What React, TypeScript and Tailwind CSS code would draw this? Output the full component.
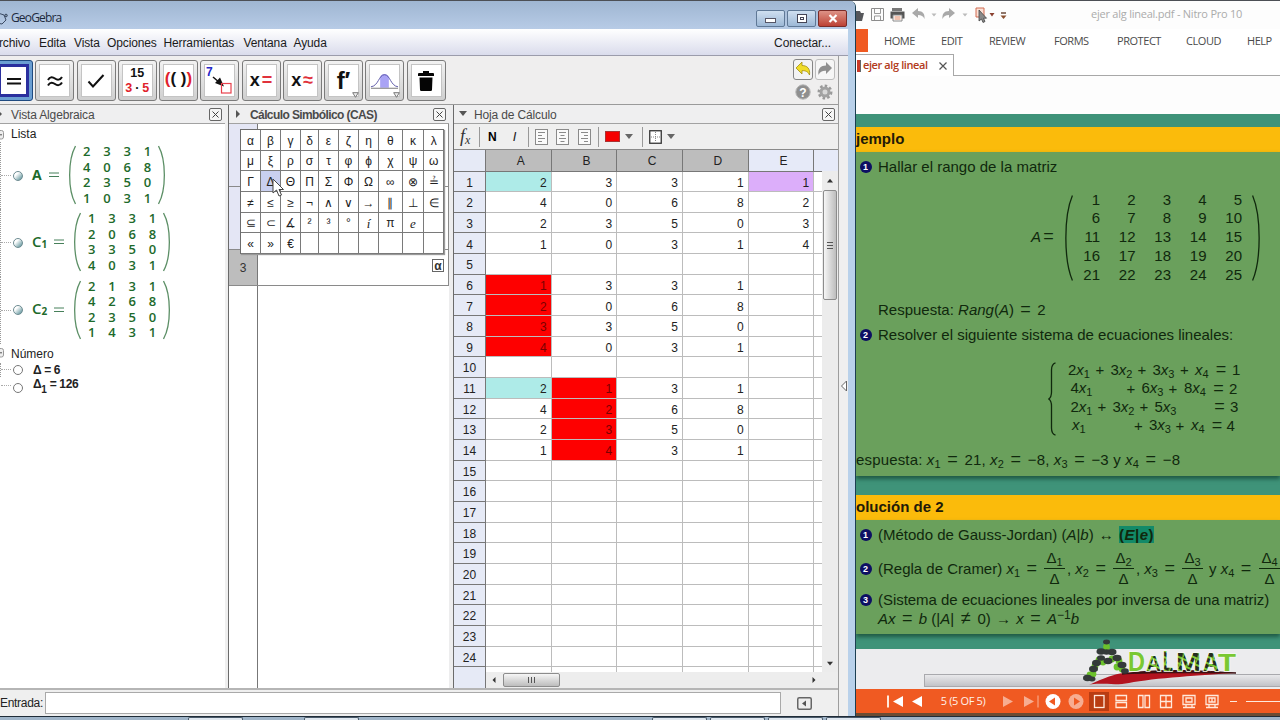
import { Fragment } from "react";
import type { ReactNode } from "react";
import clsx from "clsx";

const GREEK_ROWS = ["αβγδεζηθκλ", "μξρστφϕχψω", "ΓΔΘΠΣΦΩ∞⊗≟", "≠≤≥¬∧∨→∥⊥∈", "⊆⊂∡²³°íπe ", "«»€       "];

const COLUMNS = ["A", "B", "C", "D", "E"];

const SHEET: Record<number, string[]> = {
  1: ["2", "3", "3", "1", "1"],
  2: ["4", "0", "6", "8", "2"],
  3: ["2", "3", "5", "0", "3"],
  4: ["1", "0", "3", "1", "4"],
  6: ["1", "3", "3", "1"],
  7: ["2", "0", "6", "8"],
  8: ["3", "3", "5", "0"],
  9: ["4", "0", "3", "1"],
  11: ["2", "1", "3", "1"],
  12: ["4", "2", "6", "8"],
  13: ["2", "3", "5", "0"],
  14: ["1", "4", "3", "1"],
};

const CELL_FILL: Record<string, string> = {
  A1: "bg-[#aeebe8]",
  E1: "bg-[#dcaefa]",
  A6: "bg-[#fe0000] text-[#7a0000]",
  A7: "bg-[#fe0000] text-[#7a0000]",
  A8: "bg-[#fe0000] text-[#7a0000]",
  A9: "bg-[#fe0000] text-[#7a0000]",
  A11: "bg-[#aeebe8]",
  B11: "bg-[#fe0000] text-[#7a0000]",
  B12: "bg-[#fe0000] text-[#7a0000]",
  B13: "bg-[#fe0000] text-[#7a0000]",
  B14: "bg-[#fe0000] text-[#7a0000]",
};

const LISTS = [
  { name: "A", sub: "", rows: ["2331", "4068", "2350", "1031"] },
  { name: "C", sub: "1", rows: ["1331", "2068", "3350", "4031"] },
  { name: "C", sub: "2", rows: ["2131", "4268", "2350", "1431"] },
];

// [text, width] pairs, one array per equation
const EQUATIONS: { start: number; terms: [string, number][] }[] = [
  {
    start: 0,
    terms: [["2*x*_1", 27.5], ["+", 15], ["3*x*_2", 27], ["+", 15], ["3*x*_3", 27.5], ["+", 15], ["*x*_4", 18.5], ["=", 18.5], ["1", 10]],
  },
  { start: 2.5, terms: [["4*x*_1", 56], ["+", 15], ["6*x*_3", 27], ["+", 15.5], ["8*x*_4", 27], ["=", 18], ["2", 10]] },
  { start: 2.5, terms: [["2*x*_1", 27], ["+", 15], ["3*x*_2", 27], ["+", 15], ["5*x*_3", 57.5], ["=", 18], ["3", 10]] },
  { start: 4, terms: [["*x*_1", 62], ["+", 15], ["3*x*_3", 26.5], ["+", 15.5], ["*x*_4", 18.5], ["=", 17], ["4", 10]] },
];

// *x* is italic, _1 is a subscript, ^{-1} is a superscript, relations are set wide
const MathText = ({ children }: { children: string }) => (
  <>
    {children.split(/(\*[^*]+\*|_.|\^\{[^}]+\}|[=≠→↔])/).map((part, i) => {
      if (/^[=≠→↔]$/.test(part))
        return (
          <span
            key={i}
            className={clsx(
              "inline-block text-center leading-[10px]",
              part === "=" || part === "≠" ? "w-[15px] text-[18px]" : "w-[17px] text-[15px]"
            )}
          >
            {part}
          </span>
        );
      if (part.startsWith("*")) return <i key={i}>{part.slice(1, -1)}</i>;
      if (part.startsWith("_"))
        return (
          <span key={i} className="align-[-3px] text-[11px] leading-none">
            {part.slice(1)}
          </span>
        );
      if (part.startsWith("^"))
        return (
          <span key={i} className="align-[5px] text-[12px] leading-none">
            {part.slice(2, -1)}
          </span>
        );
      return <Fragment key={i}>{part}</Fragment>;
    })}
  </>
);

const CloseBox = () => (
  <svg width="13" height="13" viewBox="0 0 13 13" fill="none" className="shrink-0">
    <rect x="0.5" y="0.5" width="12" height="12" rx="1.5" fill="#f6f6f6" stroke="#666" />
    <path d="M3.5 3.5l6 6M9.5 3.5l-6 6" stroke="#444" />
  </svg>
);

const Triangle = ({ dir = "down", className = "" }: { dir?: "down" | "right" | "left" | "up"; className?: string }) => {
  const d = { down: "M0 1h8l-4 5z", right: "M2 0v8l4-4z", left: "M6 0v8l-4-4z", up: "M0 6h8l-4-5z" }[dir];
  return (
    <svg width="8" height="8" viewBox="0 0 8 8" fill="currentColor" className={clsx("shrink-0", className)}>
      <path d={d} />
    </svg>
  );
};

const ToolButton = ({ children, active, menu }: { children: ReactNode; active?: boolean; menu?: boolean }) => (
  <div
    className={clsx(
      "relative h-[41px] w-[39px] shrink-0 rounded-[3px] border p-[3px]",
      active ? "border-[#1f4a80] bg-[#6b9fd2]" : "border-[#7b7b7b] bg-linear-to-b from-[#f2f2f2] to-[#cfcfcf]"
    )}
  >
    <div
      className={clsx(
        "flex h-full w-full items-center justify-center overflow-hidden",
        active ? "border-[3px] border-[#2a2f9e] bg-white" : "border border-[#c4c4c4] bg-white"
      )}
    >
      {children}
    </div>
    {menu && (
      <svg className="absolute right-[3px] bottom-[2px]" width="7" height="6" viewBox="0 0 7 6">
        <path d="M.7.7h5.6L3.5 5.3z" fill="#eee" stroke="#777" />
      </svg>
    )}
  </div>
);

const Toolbar = () => (
  <div className="flex h-[49px] shrink-0 border-b border-[#9a9a9a] bg-[#efeeee] pt-[4px]">
    <div className="-ml-[6px] flex gap-[2.25px]">
      <ToolButton active>
        <svg width="16" height="12" viewBox="0 0 16 12" stroke="#111" strokeWidth="2">
          <path d="M1 4h14M1 8.5h14" />
        </svg>
      </ToolButton>
      <ToolButton>
        <svg width="16" height="14" viewBox="0 0 16 14" stroke="#111" strokeWidth="2" fill="none">
          <path d="M1 6c2-4 5-3 7-1.500s5 2 7-1.500M1 11.500c2-4 5-3 7-1.500s5 2 7-1.500" />
        </svg>
      </ToolButton>
      <ToolButton>
        <svg width="18" height="16" viewBox="0 0 18 16" stroke="#111" strokeWidth="2" fill="none">
          <path d="M1.500 8.500L6 13.500 16.500 2" />
        </svg>
      </ToolButton>
      <ToolButton>
        <div className="text-center text-[12.500px] leading-[14.500px] font-bold">
          <div className="text-[#111]">15</div>
          <div className="whitespace-nowrap text-[#e0222c]">
            3<span className="px-[3px] text-[#111]">·</span>5
          </div>
        </div>
      </ToolButton>
      <ToolButton>
        <div className="-mt-1 text-[17px] leading-none whitespace-nowrap text-[#111]">
          <b className="font-bold text-[#e0222c]">(</b>
          <span className="font-bold">( )</span>
          <b className="font-bold text-[#e0222c]">)</b>
        </div>
      </ToolButton>
      <ToolButton>
        <svg width="31" height="33" viewBox="0 0 31 33" className="shrink-0">
          <text x="2" y="12" fontSize="12" fontWeight="bold" fill="#2626c8">
            7
          </text>
          <path d="M9 13l7 6" stroke="#111" strokeWidth="1.500" />
          <path d="M20 22.500l-9-3.500 5-5.500z" fill="#111" />
          <rect x="17.500" y="19.500" width="9.500" height="9.500" fill="none" stroke="#e8404c" strokeWidth="1.200" />
        </svg>
      </ToolButton>
      <ToolButton>
        <div className="-mt-[2px] text-[18px] leading-none font-bold whitespace-nowrap text-[#111]">
          x<span className="pl-[2px] text-[#e0323c]">=</span>
        </div>
      </ToolButton>
      <ToolButton>
        <div className="-mt-[2px] text-[18px] leading-none font-bold whitespace-nowrap text-[#111]">
          x<span className="pl-[2px] text-[#e0323c]">≈</span>
        </div>
      </ToolButton>
      <ToolButton menu>
        <span className="text-[24px] leading-none font-bold text-[#111]">f′</span>
      </ToolButton>
      <ToolButton menu>
        <svg width="30" height="20" viewBox="0 0 30 20">
          <path d="M10.500 5.500C12.500 2 17 2 19.500 5.500V17h-9z" fill="#a9a3f5" />
          <path d="M1 16C9 15 9 3.500 15 3.500S21 15 29 16" fill="none" stroke="#5b57a8" />
          <path d="M1 17.500h28" stroke="#777" />
        </svg>
      </ToolButton>
      <ToolButton>
        <svg width="18" height="22" viewBox="0 0 18 22" fill="#050505">
          <path d="M6 1h6v2h4q1 0 1 1v2H1V4q0-1 1-1h4zM2.500 7.500h13L15 20q0 1-1.500 1h-9Q3 21 3 20z" />
        </svg>
      </ToolButton>
    </div>
    <div className="ml-auto grid grid-cols-[20px_20px] gap-x-[2px] pr-[3px]">
      <svg width="20" height="21" viewBox="0 0 20 21" className="-mt-px">
        <rect x="0.500" y="0.500" width="19" height="20" rx="2.500" fill="#f3f3f3" stroke="#858585" />
        <path d="M3 9l6-6v3.500c5 0 8.500 3 7.500 9.500-1.500-3.500-4-4.500-7.500-4.300V15z" fill="#f0dc28" stroke="#a28e12" strokeWidth=".8" />
      </svg>
      <svg width="20" height="21" viewBox="0 0 20 21" className="-mt-px">
        <rect x="0.500" y="0.500" width="19" height="20" rx="2.500" fill="#f6f6f6" stroke="#bdbdbd" />
        <path d="M17 9l-6-6v3.500c-5 0-8.500 3-7.500 9.500 1.500-3.500 4-4.500 7.500-4.300V15z" fill="#8f8f8f" />
      </svg>
      <svg width="20" height="20" viewBox="0 0 20 20">
        <circle cx="10" cy="10" r="7.200" fill="#8f8f8f" stroke="#b5b5b5" />
        <text x="10" y="14.500" textAnchor="middle" fontSize="12" fontWeight="bold" fill="#fff">
          ?
        </text>
      </svg>
      <svg width="20" height="20" viewBox="0 0 20 20">
        <circle cx="10" cy="10" r="6.200" fill="none" stroke="#999" strokeWidth="2.500" strokeDasharray="2.500 2.200" />
        <circle cx="10" cy="10" r="4" fill="#d8d8d8" stroke="#a2a2a2" strokeWidth="3" />
      </svg>
    </div>
  </div>
);

const PanelHeader = ({ title, dir, bold, className }: { title: string; dir: "down" | "right"; bold?: boolean; className: string }) => (
  <div className={clsx("flex h-[19px] shrink-0 items-center border-b border-[#a2a2a2] bg-[#efeff0] text-[#4a4a4a]", className)}>
    <Triangle dir={dir} className="text-[#555]" />
    <span
      className={clsx(
        "ml-[7px] flex-1 pt-px text-[12px] whitespace-nowrap",
        bold ? "pl-px font-bold tracking-[-0.6px]" : "tracking-[-0.15px]"
      )}
    >
      {title}
    </span>
    <CloseBox />
  </div>
);

const MatrixParens = ({ side, height, width, stroke }: { side: "left" | "right"; height: number; width: number; stroke: string }) => (
  <svg width={width} height={height} viewBox="0 0 8 60" preserveAspectRatio="none" fill="none" className="shrink-0">
    <path
      d={side === "left" ? "M7.500 1C-.3 15-.3 45 7.500 59" : "M.5 1C8.300 15 8.300 45 .5 59"}
      stroke={stroke}
      strokeWidth="1.300"
      vectorEffect="non-scaling-stroke"
    />
  </svg>
);

const AlgebraView = () => (
  <div className="flex w-[225px] shrink-0 flex-col bg-white">
    <PanelHeader title="Vista Algebraica" dir="right" className="-ml-[4px] pr-[3px]" />
    <div className="flex-1 text-[12px] text-[#222]">
      <div className="flex h-[18px] items-end">
        <svg width="11" height="12" viewBox="0 0 11 12">
          <rect x="-5" y="0.500" width="8.500" height="8.500" rx="2" fill="#eee" stroke="#999" />
          <path d="M-1 4.800h3" stroke="#555" />
        </svg>
        <span className="leading-[15px]">Lista</span>
      </div>
      {LISTS.map((list, i) => (
        <div key={i} className="flex h-[67.300px] items-center border-l border-dotted border-[#999] font-['Open_Sans'] text-[#1d6a2b]">
          <span className="w-[10px] border-t border-dotted border-[#aaa]" />
          <span className="ml-[2px] h-[10px] w-[10px] rounded-full border border-[#6d8b91] bg-linear-to-br from-white from-30% to-[#4f8b93]" />
          <span
            className={clsx(
              "-mt-[3px] ml-[9px] flex items-center whitespace-nowrap",
              list.sub ? "w-[32px] text-[15px] font-semibold" : "w-[27px] text-[14px] font-bold"
            )}
          >
            {list.name}
            {list.sub && <span className="mt-[5px] text-[10px] leading-none font-bold">{list.sub}</span>}
            <svg width="10" height="6" viewBox="0 0 10 6" className="mt-[2px] ml-auto" stroke="#47805a">
              <path d="M0 1h10M0 4.500h10" />
            </svg>
          </span>
          <span className="-mt-px ml-[9px] flex items-center">
            <MatrixParens side="left" height={60} width={8} stroke="#5c8f66" />
            <span className="grid grid-cols-[repeat(4,20.300px)] px-[0.500px] text-center text-[13px] leading-[15.500px] font-semibold">
              {list.rows.flatMap((row, r) => row.split("").map((v, c) => <span key={`${r}${c}`}>{v}</span>))}
            </span>
            <MatrixParens side="right" height={60} width={8} stroke="#5c8f66" />
          </span>
        </div>
      ))}
      <div className="flex h-[19px] items-center">
        <svg width="11" height="12" viewBox="0 0 11 12">
          <rect x="-5" y="1.500" width="8.500" height="8.500" rx="2" fill="#eee" stroke="#999" />
          <path d="M-1 5.800h3" stroke="#555" />
        </svg>
        <span className="pt-px">Número</span>
      </div>
      <div className="flex h-[14px] items-center border-l border-dotted border-[#999] font-bold">
        <span className="w-[10px] border-t border-dotted border-[#aaa]" />
        <span className="ml-[2px] h-[10px] w-[10px] rounded-full border border-[#777]" />
        <span className="ml-[10px] tracking-[-0.4px]">Δ = 6</span>
      </div>
      <div className="flex h-[18px] items-center font-bold">
        <span className="ml-[1px] w-[10px] border-t border-dotted border-[#aaa]" />
        <span className="mt-[4px] ml-[2px] h-[10px] w-[10px] rounded-full border border-[#777]" />
        <span className="-mt-[2px] ml-[10px] tracking-[-0.3px] whitespace-nowrap">
          Δ<span className="align-[-5px] text-[10px] leading-none">1</span> = 126
        </span>
      </div>
    </div>
  </div>
);

const SymbolPopup = () => (
  <div className="absolute top-[5px] left-[11px] border-t border-l border-[#6d6d6d] bg-white shadow-[1px_1px_1px_#999]">
    <div className="grid grid-cols-[20px_20px_20px_18px_20px_20px_20px_23.700px_21.600px_20px] grid-rows-[repeat(6,20.650px)]">
      {GREEK_ROWS.flatMap((row, r) =>
        row.split("").map((s, c) => (
          <span
            key={`${r}-${c}`}
            className={clsx(
              "flex items-center justify-center border-r border-b border-[#7a7a7a] pt-[2px] text-[12px] leading-none text-[#222]",
              s === "Δ" && "bg-[#c9d0f0]",
              (s === "í" || s === "e") && "font-['Liberation_Serif'] text-[13px] italic"
            )}
          >
            {s}
          </span>
        ))
      )}
    </div>
    <svg width="14" height="20" viewBox="0 0 14 20" className="absolute top-[48px] left-[31px]">
      <path d="M1 1v14l3.500-3L7 18l2.500-1-2.500-5.500H11.500z" fill="#fff" stroke="#444" />
    </svg>
  </div>
);

const CasView = () => (
  <div className="flex w-[226px] shrink-0 flex-col border-r border-l border-[#6b6b6b] bg-[#ededee]">
    <PanelHeader title="Cálculo Simbólico (CAS)" dir="right" bold className="mr-[4px] pr-[3px] pl-[5px]" />
    <div className="relative mr-[4px] flex flex-1 flex-col bg-white text-[12px] text-[#333]">
      {["h-[63px]", "h-[63px]", "h-[36px]"].map((h, i) => (
        <div key={i} className={clsx("flex border-r border-b border-[#8a8a8a]", h)}>
          <div
            className={clsx(
              "flex w-[29px] items-center justify-center border-r border-[#777]",
              i === 2 ? "bg-[#bdbdbd]" : "bg-[#e4e6f5]"
            )}
          >
            {i === 2 && "3"}
          </div>
          {i === 2 && (
            <span className="mt-[9px] mr-[4px] ml-auto flex h-[13px] w-[12px] items-center justify-center border border-[#666] text-[12px] leading-none font-bold">
              α
            </span>
          )}
        </div>
      ))}
      <div className="w-[29px] flex-1 border-r border-[#777]" />
      <SymbolPopup />
    </div>
  </div>
);

const AlignIcon = ({ d }: { d: string }) => (
  <svg width="13" height="16" viewBox="0 0 13 16" fill="none" className="shrink-0">
    <rect x="0.500" y="0.500" width="12" height="15" fill="#fafafa" stroke="#8a8a8a" />
    <path d={d} stroke="#8a8a8a" />
  </svg>
);

const SheetToolbar = () => (
  <div className="flex h-[26px] shrink-0 items-center border-b border-[#8a8a8a] bg-[#efefef] text-[#222]">
    <span className="ml-[6px] w-[15px] font-['Liberation_Serif'] text-[18px] leading-none text-[#333] italic">
      f<span className="align-[-2px] text-[12px]">x</span>
    </span>
    <span className="ml-[4px] h-[20px] border-l border-[#999]" />
    <b className="ml-[8px] text-[12px] text-black">N</b>
    <i className="ml-[16px] w-[4px] text-[13px]">I</i>
    <span className="ml-[11px] h-[20px] border-l border-[#999]" />
    <span className="ml-[6px] flex gap-[8.500px]">
      <AlignIcon d="M3 3.500h7M3 6.500h4M3 9.500h7M3 12.500h4" />
      <AlignIcon d="M3 3.500h7M4.500 6.500h4M3 9.500h7M4.500 12.500h4" />
      <AlignIcon d="M3 3.500h7M6 6.500h4M3 9.500h7M6 12.500h4" />
    </span>
    <span className="ml-[7px] h-[20px] border-l border-[#999]" />
    <span className="ml-[6px] h-[11px] w-[15px] border border-[#a33] bg-[#f60000]" />
    <Triangle className="ml-[5px] text-[#666]" />
    <span className="ml-[9px] h-[20px] border-l border-[#999]" />
    <svg width="13" height="14" viewBox="0 0 13 14" className="ml-[6px]" fill="none">
      <rect x="0.750" y="0.750" width="11.500" height="12.500" fill="#fff" stroke="#333" strokeWidth="1.300" />
      <path d="M6.500 2v10M2 7h9" stroke="#888" strokeDasharray="1 1" />
    </svg>
    <Triangle className="ml-[5px] text-[#666]" />
  </div>
);

const SpreadsheetView = () => (
  <div className="flex min-w-0 flex-1 flex-col bg-[#ededed]">
    <PanelHeader title="Hoja de Cálculo" dir="down" className="pr-[3px] pl-[5px]" />
    <SheetToolbar />
    <div className="flex h-[522px] text-[12px] leading-[14px] text-[#222]">
      <div className="flex w-[368px] flex-col overflow-hidden bg-white">
        <div className="grid h-[21.500px] shrink-0 grid-cols-[32px_repeat(5,65.650px)_65.650px]">
          <span className="border-r border-b border-[#777] bg-[#e6eaf6]" />
          {COLUMNS.map((c) => (
            <span
              key={c}
              className={clsx(
                "flex items-center justify-center border-r border-b border-[#777] pt-[2px] pl-[5px]",
                c === "E" ? "bg-[#e6eaf8]" : "bg-[#bdbdbd]"
              )}
            >
              {c}
            </span>
          ))}
          <span className="border-b border-[#777] bg-[#e6eaf8]" />
        </div>
        {Array.from({ length: 25 }, (_, i) => i + 1).map((n) => (
          <div key={n} className="grid h-[20.670px] shrink-0 grid-cols-[32px_repeat(5,65.650px)_65.650px]">
            <span className="flex items-center justify-center border-r border-b border-[#777] bg-[#e6eaf6] pt-[2.500px]">
              {n < 25 && n}
            </span>
            {COLUMNS.map((c, ci) => (
              <span
                key={c}
                className={clsx(
                  "flex items-center justify-end border-r border-b border-[#bcbcbc] pt-[2.500px] pr-[4px]",
                  CELL_FILL[`${c}${n}`]
                )}
              >
                {SHEET[n]?.[ci]}
              </span>
            ))}
            <span className="border-b border-[#bcbcbc]" />
          </div>
        ))}
      </div>
      <div className="flex w-[16px] flex-col items-center bg-[#ececec]">
        <div className="h-[21px] w-full bg-[#e6eaf8]" />
        <Triangle dir="up" className="mt-[6px] scale-75 text-[#333]" />
        <div className="mt-[5px] flex h-[110px] w-[14px] flex-col items-center justify-center gap-[2px] rounded-[2px] border border-[#8c8c8c] bg-linear-to-r from-[#f6f6f6] to-[#bdbdbd]">
          {[0, 1, 2].map((k) => (
            <span key={k} className="w-[6px] border-t border-[#555]" />
          ))}
        </div>
        <Triangle dir="down" className="mt-auto mb-[4px] scale-75 text-[#333]" />
      </div>
    </div>
    <div className="flex h-[16px]">
      <div className="w-[32px] border-r border-[#777] bg-[#e6eaf6]" />
      <div className="flex flex-1 items-center">
        <Triangle dir="left" className="ml-[4px] scale-75 text-[#333]" />
        <div className="ml-[5px] flex h-[14px] w-[57px] items-center justify-center gap-[2px] rounded-[2px] border border-[#8c8c8c] bg-linear-to-b from-[#f6f6f6] to-[#bdbdbd]">
          {[0, 1, 2].map((k) => (
            <span key={k} className="h-[6px] border-l border-[#555]" />
          ))}
        </div>
        <Triangle dir="right" className="mr-[20px] ml-auto scale-75 text-[#333]" />
      </div>
    </div>
  </div>
);

const MENU: [string, string][] = [
  ["Archivo", "w-[48px]"],
  ["Edita", "w-[35px]"],
  ["Vista", "w-[33px]"],
  ["Opciones", "w-[56.500px]"],
  ["Herramientas", "w-[80px]"],
  ["Ventana", "w-[50px]"],
  ["Ayuda", "w-[34px]"],
];

const GeoGebraWindow = () => (
  <div className="flex h-[715px] w-[856px] shrink-0 flex-col overflow-hidden rounded-tr-[6px] border-r border-[#1c3f52] bg-[#b9d1ea] font-['Liberation_Sans',sans-serif]">
    <div className="flex h-[28px] shrink-0 items-center bg-linear-to-b from-[#9fb6d2] to-[#b7cbe6] pr-[8px]">
      <svg width="8" height="16" viewBox="0 0 8 16" fill="none" stroke="#3b4a63" className="mt-[6px]">
        <path d="M-2 3l6 2 2 5-4 4-5-1" />
        <circle cx="6" cy="5.500" r="1.300" fill="#89a" />
      </svg>
      <span className="ml-[3px] flex-1 pt-[6px] font-['Open_Sans'] text-[12px] tracking-[-0.85px] text-[#1d2a3d]">GeoGebra</span>
      <div className="mt-[6px] flex gap-[2px]">
        <span className="flex h-[17px] w-[29px] items-center justify-center rounded-[2px] border border-[#5f7896] bg-linear-to-b from-[#cfdff0] to-[#9db8d6]">
          <span className="mt-[4px] h-[5px] w-[11px] border border-[#556] bg-white" />
        </span>
        <span className="flex h-[17px] w-[29px] items-center justify-center rounded-[2px] border border-[#5f7896] bg-linear-to-b from-[#cfdff0] to-[#9db8d6]">
          <span className="flex h-[9px] w-[10px] items-center justify-center border border-[#445] bg-white">
            <span className="h-[3px] w-[4px] border border-[#445]" />
          </span>
        </span>
        <span className="flex h-[17px] w-[29px] items-center justify-center rounded-[2px] border border-[#7a2c28] bg-linear-to-b from-[#dd9287] to-[#bc4034]">
          <svg width="10" height="9" viewBox="0 0 10 9">
            <path d="M1.500 1l7 7M8.500 1l-7 7" stroke="#fff" strokeWidth="2.200" />
          </svg>
        </span>
      </div>
    </div>
    <div className="mr-[7px] flex min-h-0 flex-1 flex-col bg-[#efefef]">
      <div className="flex h-[27px] shrink-0 items-center border-b border-[#9b9cab] bg-linear-to-b from-white to-[#dadcec] pt-[2px] text-[12px] text-[#1b1b1b]">
        <div className="-ml-[9px] flex tracking-[-0.12px]">
          {MENU.map(([label, width]) => (
            <span key={label} className={clsx("shrink-0 whitespace-nowrap", width)}>
              {label}
            </span>
          ))}
        </div>
        <span className="mr-[17px] ml-auto tracking-[-0.1px]">Conectar...</span>
      </div>
      <div className="flex min-h-0 flex-1">
        <div className="flex w-[838px] flex-col">
          <Toolbar />
          <div className="flex h-[583px] shrink-0">
            <AlgebraView />
            <div className="w-[3px] shrink-0 bg-[#efefef]" />
            <CasView />
            <SpreadsheetView />
          </div>
          <div className="flex flex-1 items-center border-t-2 border-[#b5b5b5] bg-[#efefef] text-[12px] text-[#222]">
            <span className="w-[45px] tracking-[-0.3px] whitespace-nowrap">Entrada:</span>
            <div className="h-[22px] w-[736px] border border-[#a9a9a9] bg-white" />
            <svg width="15" height="13" viewBox="0 0 15 13" className="ml-[16px]">
              <rect x="0.750" y="0.750" width="13.500" height="11.500" rx="1.500" fill="#eee" stroke="#666" strokeWidth="1.500" />
              <path d="M9 3.500v6l-4-3z" fill="#555" />
            </svg>
          </div>
        </div>
        <div className="flex flex-1 flex-col items-center border-l border-[#9d9d9d] bg-[#efefef]">
          <svg width="8" height="12" viewBox="0 0 8 12" className="mt-[324px]">
            <path d="M6.500 1v10L1.500 6z" fill="#fff" stroke="#666" />
          </svg>
        </div>
      </div>
    </div>
  </div>
);

const QuickAccess = () => (
  <svg width="160" height="28" viewBox="0 0 160 28" fill="none" className="-mt-px">
    <path d="M0 10h4l1 2h3l-2 8H0z" fill="#55565a" />
    <path d="M15.500 7.500h12v12h-12z" stroke="#8c8c8c" />
    <path d="M18.500 8v4.500h6V8M18.500 19v-4h6v4" stroke="#999" />
    <path d="M36 7h10v3H36z" fill="#777" />
    <path d="M34.500 10.500h14v7h-14z" fill="#555" />
    <path d="M37 14h9v6h-9z" fill="#fff" stroke="#888" />
    <path d="M38.500 16h6M38.500 18h6" stroke="#e2845f" />
    <path d="M56 12l6-5v3c5 0 7 3 6.500 8-1.500-3-3-4-6.500-4v3z" fill="#a9a9a9" />
    <path d="M75.500 12.500h5l-2.500 3z" fill="#bbb" />
    <path d="M99 12l-6-5v3c-5 0-7 3-6.500 8 1.500-3 3-4 6.500-4v3z" fill="#a9a9a9" />
    <path d="M106.500 12.500h5l-2.500 3z" fill="#bbb" />
    <path d="M120 7h8v9h-8z" fill="#fbe0d6" stroke="#d06a50" />
    <path d="M123 9v11l2.500-2 1.500 3.500 2-1-1.500-3.300h3z" fill="#8a8a8a" stroke="#444" strokeWidth=".8" />
    <path d="M133.500 12h5l-2.500 3.500z" fill="#8a4030" />
    <path d="M145 12h5" stroke="#6b4a3a" strokeWidth="1.500" />
    <path d="M144.500 14.500h6l-3 3.500z" fill="#8a5030" />
  </svg>
);

const Bullet = ({ n }: { n: number }) => (
  <span className="mr-[6.500px] ml-[3.500px] flex h-[12px] w-[12px] shrink-0 items-center justify-center rounded-full bg-[#0d0f63] text-[9px] leading-none font-bold text-white">
    {n}
  </span>
);

const Line = ({ n, className, children }: { n?: number; className?: string; children: ReactNode }) => (
  <div className={clsx("flex h-[18px] items-center leading-[18px] whitespace-nowrap", className)}>
    {n ? <Bullet n={n} /> : null}
    <span>{children}</span>
  </div>
);

const Fraction = ({ n }: { n: number }) => (
  <span className="flex w-[21px] flex-col items-center">
    <span className="h-[18px] leading-[16px]">
      <MathText>{`Δ_${n}`}</MathText>
    </span>
    <span className="w-full border-t border-[#0f2a0c] text-center leading-[20px]">Δ</span>
  </span>
);

const MATRIX = Array.from({ length: 25 }, (_, i) => i + 1);

const Slide = () => (
  <div className="flex flex-col bg-[#3f9379] text-[15px] text-[#10280d]">
    <div className="mt-[13px] flex h-[25px] items-center bg-[#fbbb0b] font-bold text-[#221a08]">jemplo</div>
    <div className="h-[324px] bg-[#6aa05c] pt-[6px] shadow-[0_3px_4px_#1f5a45]">
      <Line n={1}>Hallar el rango de la matriz</Line>
      <div className="mt-[15px] ml-[175px] flex h-[93px] items-center">
        <span className="w-[33px] whitespace-nowrap">
          <MathText>*A*=</MathText>
        </span>
        <MatrixParens side="left" height={88} width={9} stroke="#10280d" />
        <div className="grid grid-cols-[26px_repeat(4,35.500px)] pr-[10px] pl-[1px] text-right leading-[18.700px]">
          {MATRIX.map((n) => (
            <span key={n}>{n}</span>
          ))}
        </div>
        <MatrixParens side="right" height={88} width={9} stroke="#10280d" />
      </div>
      <Line className="mt-[17px] pl-[22px]">
        <MathText>Respuesta: *Rang*(*A*) = 2</MathText>
      </Line>
      <Line n={2} className="mt-[7px]">
        Resolver el siguiente sistema de ecuaciones lineales:
      </Line>
      <div className="mt-[17px] ml-[192px] flex h-[75px] items-center">
        <svg width="8" height="74" viewBox="0 0 8 74" fill="none" stroke="#10280d" strokeWidth="1.300">
          <path d="M7.500 .8Q3.500 2 3.500 8V30Q3.500 35 .8 37Q3.500 39 3.500 44V66Q3.500 72 7.500 73.200" />
        </svg>
        <div className="-mt-px ml-[12px]">
          {EQUATIONS.map((eq, i) => (
            <div key={i} className="flex h-[18.600px] items-center whitespace-nowrap" style={{ paddingLeft: eq.start }}>
              {eq.terms.map(([t, w], k) => (
                <span key={k} className="shrink-0 leading-[18px]" style={{ width: w }}>
                  <MathText>{t}</MathText>
                </span>
              ))}
            </div>
          ))}
        </div>
      </div>
      <Line className="mt-[15px] tracking-[0.16px]">
        <MathText>espuesta: *x*_1 = 21, *x*_2 = −8, *x*_3 = −3 y *x*_4 = −8</MathText>
      </Line>
    </div>
    <div className="mt-[19px] flex h-[25px] items-center bg-[#fbbb0b] font-bold text-[#221a08]">olución de 2</div>
    <div className="h-[114px] bg-[#6aa05c] pt-[6px] shadow-[0_3px_4px_#1f5a45]">
      <Line n={1}>
        <MathText>(Método de Gauss-Jordan) (*A*|*b*) ↔ </MathText>
        <span className="bg-[#128a68] font-bold tracking-[0.5px]">
          <MathText>(*E*|*e*)</MathText>
        </span>
      </Line>
      <div className="mt-[6px] flex h-[38px] items-center whitespace-nowrap">
        <Bullet n={2} />
        <span className="w-[166px]">
          <MathText>(Regla de Cramer) *x*_1 =</MathText>
        </span>
        <Fraction n={1} />
        <span className="w-[48px] pl-[2px]">
          <MathText>, *x*_2 =</MathText>
        </span>
        <Fraction n={2} />
        <span className="w-[48px] pl-[2px]">
          <MathText>, *x*_3 =</MathText>
        </span>
        <Fraction n={3} />
        <span className="w-[56px] pl-[6px]">
          <MathText>y *x*_4 =</MathText>
        </span>
        <Fraction n={4} />
      </div>
      <Line n={3} className="mt-[3px] tracking-[-0.04px]">
        (Sistema de ecuaciones lineales por inversa de una matriz)
      </Line>
      <Line className="pl-[22px]">
        <MathText>{"*Ax* = *b* (|*A*| ≠ 0) → *x* = *A*^{−1}*b*"}</MathText>
      </Line>
    </div>
    <div className="h-[15px]" />
  </div>
);

const LOGO_NODES = [
  [22.5, 2, 3.5], [17, 11.5, 4.5], [28, 12, 4.5], [22.5, 12, 4], [17, 18, 4], [33, 18, 4.5],
  [12.5, 23, 4.5], [24, 21, 4.5], [38, 25, 4.5], [9.5, 29, 4.5], [41, 31, 4], [3.5, 38, 4.5], [8, 39, 3.5],
];

const LOGO_LINKS = [[22.5, 7], [15, 20], [28, 19], [35, 21], [19, 22], [11, 26], [33, 27], [38, 29], [9, 34], [6, 35]];

// letter, x, font size, width
const LOGO_LETTERS: [string, number, number, number][] = [
  ["D", 44, 27, 17], ["A", 62, 22, 15], ["L", 79, 30, 10], ["M", 92, 26, 25], ["A", 119, 25, 16], ["T", 134, 23, 18],
];

const AdalmatLogo = () => (
  <svg width="156" height="48" viewBox="0 0 156 48" className="absolute top-[-9px] left-[228px] overflow-visible">
    <defs>
      <pattern id="logoStripe" width="7" height="6" patternUnits="userSpaceOnUse" patternTransform="rotate(24)">
        <rect width="7" height="6" fill="#7ac832" />
        <rect y="2" width="5.500" height="4" fill="#232c20" />
      </pattern>
    </defs>
    <path d="M5 45C20 38 30 34 40 33 80 29 120 31 150 33 120 35 70 38 45 43 30 46 15 42 5 45z" fill="#b3131f" />
    <path d="M38 34C80 28 120 31 152 33 120 33 70 32 38 34z" fill="#3a1012" stroke="#3a1012" />
    {LOGO_LINKS.map(([x, y], i) => (
      <circle key={i} cx={x} cy={y} r="3.400" fill="#6cc22c" />
    ))}
    {LOGO_NODES.map(([x, y, r], i) => (
      <ellipse key={i} cx={x} cy={y} rx={r} ry={r * 0.7} fill="#343a3a" />
    ))}
    <g fontFamily="Liberation Sans" fontWeight="bold" stroke="#f4f8ee" strokeWidth="1.500" paintOrder="stroke">
      {LOGO_LETTERS.map(([ch, x, size, width], i) => (
        <text
          key={i}
          x={x}
          y="31"
          fontSize={size}
          textLength={width}
          lengthAdjust="spacingAndGlyphs"
          fill={ch === "D" || ch === "T" ? "#7ac832" : "url(#logoStripe)"}
        >
          {ch}
        </text>
      ))}
    </g>
  </svg>
);

const StatusCell = ({ children, active, faded }: { children: ReactNode; active?: boolean; faded?: boolean }) => (
  <span
    className={clsx("flex h-full w-[22.600px] shrink-0 items-center justify-center", faded && "opacity-50")}
  >
    <svg
      width="20"
      height="19"
      viewBox="0 0 20 19"
      fill="none"
      stroke="#ffe9dc"
      strokeWidth="1.300"
      className={clsx(active && "bg-[#b93c12]")}
    >
      {children}
    </svg>
  </span>
);

const StatusBar = () => (
  <div className="flex h-[24px] shrink-0 items-center bg-[#f05a22] pl-[28px]">
    <StatusCell>
      <path d="M3 3.500v12" strokeWidth="2" />
      <path d="M18 4v11l-10-5.500z" fill="#fff" stroke="none" />
    </StatusCell>
    <StatusCell>
      <path d="M14 4v11L4 9.500z" fill="#fff" stroke="none" />
    </StatusCell>
    <span className="w-[67.800px] text-center text-[11px] tracking-[-0.35px] whitespace-nowrap text-[#fff1e8]">5 (5 OF 5)</span>
    <StatusCell faded>
      <path d="M5 4v11l10-5.500z" fill="#fff" stroke="none" />
    </StatusCell>
    <StatusCell faded>
      <path d="M17 3.500v12" />
      <path d="M3 4v11l10-5.500z" fill="#fff" stroke="none" />
    </StatusCell>
    <StatusCell>
      <circle cx="10" cy="9.500" r="7.500" fill="#fff" stroke="none" />
      <path d="M12 5.500v8l-6-4z" fill="#f05a22" stroke="none" />
    </StatusCell>
    <StatusCell faded>
      <circle cx="10" cy="9.500" r="7.500" fill="#fff" stroke="none" />
      <path d="M8 5.500v8l6-4z" fill="#f05a22" stroke="none" />
    </StatusCell>
    <StatusCell active>
      <rect x="5.500" y="3.500" width="9.500" height="12" />
    </StatusCell>
    <StatusCell>
      <path d="M5 3.500h10.500v5H5zM5 10.500h10.500v5H5z" />
    </StatusCell>
    <StatusCell>
      <path d="M4.500 3.500H9v12H4.500zM11 3.500h4.500v12H11z" />
    </StatusCell>
    <StatusCell>
      <path d="M4.500 3.500h11v12h-11zM10 3.500v12M4.500 9.500h11" />
    </StatusCell>
    <StatusCell>
      <path d="M4 3.500h12v9H4zM7 6h6v4H7zM7 12.500v3M13 12.500v3M4 15.500h12" />
    </StatusCell>
    <StatusCell>
      <path d="M4 3.500h12v9H4zM7 6h6v4H7zM10 6v4M7 12.500v3M13 12.500v3M4 15.500h12" />
    </StatusCell>
    <span className="ml-[7px] w-[7px] border-t border-[#ffe9dc]" />
    <span className="ml-[9px] flex-1 border-t border-[#ffe9dc]" />
  </div>
);

const TABS: [string, string][] = [
  ["HOME", "w-[57px]"],
  ["EDIT", "w-[48px]"],
  ["REVIEW", "w-[65px]"],
  ["FORMS", "w-[63px]"],
  ["PROTECT", "w-[69px]"],
  ["CLOUD", "w-[61px]"],
  ["HELP", "w-[30px]"],
];

const NitroWindow = () => (
  <div className="flex h-[715px] min-w-0 flex-1 flex-col overflow-hidden bg-white font-['Open_Sans',sans-serif]">
    <div className="flex h-[28px] shrink-0 items-center bg-[#fdfdfd]">
      <QuickAccess />
      <span className="-mt-px ml-[75px] text-[11px] tracking-[-0.23px] whitespace-nowrap text-[#ababab]">
        ejer alg lineal.pdf - Nitro Pro 10
      </span>
    </div>
    <div className="flex h-[23px] shrink-0 items-center text-[11px] tracking-[-0.45px] text-[#4b4b4b]">
      <span className="mr-[16px] h-full w-[12px] bg-[#f05a22]" />
      {TABS.map(([label, width]) => (
        <span key={label} className={clsx("shrink-0 pt-[2px]", width)}>
          {label}
        </span>
      ))}
    </div>
    <div className="mt-[2px] flex h-[22px] shrink-0">
      <div className="flex w-[98px] items-center border-t border-r border-[#a8a8a8] pl-px text-[11px]">
        <span className="h-[12px] w-[4px] border-r border-[#666] bg-[#c93a28]" />
        <span className="ml-[2px] font-semibold tracking-[-0.4px] whitespace-nowrap text-[#b23a20]">ejer alg lineal</span>
        <svg width="8" height="8" viewBox="0 0 8 8" className="mr-[6px] ml-auto" stroke="#555" strokeWidth="1.200">
          <path d="M.5.5l7 7M7.500.5l-7 7" />
        </svg>
      </div>
      <div className="flex-1 border-b border-[#a8a8a8]" />
    </div>
    <div className="h-[38px] shrink-0 bg-[#fdfdfd]" />
    <div className="font-['Liberation_Sans',sans-serif]">
      <Slide />
    </div>
    <div className="relative flex h-[40px] shrink-0 items-end bg-[#ececee] pb-[2px] pl-[68px]">
      <div className="h-[13px] flex-1 border border-r-0 border-[#a9a9ad] bg-linear-to-b from-[#e9e9eb] to-[#c2c3c8]" />
      <AdalmatLogo />
    </div>
    <StatusBar />
    <div className="flex-1 bg-[#6b4c33]" />
  </div>
);

const Taskbar = () => (
  <div className="flex h-[4px] border-t border-[#1f2c38] bg-[#9fb4c8]">
    {["ml-[188px]", "ml-[61px]", "ml-[293px]", "ml-[3px]", "ml-[3px]", "ml-[3px]"].map((m, i) => (
      <span key={i} className={clsx("h-full w-[55px] shrink-0 rounded-t-[2px] border border-b-0 border-[#4a5a6a] bg-[#dfe7ef]", m)} />
    ))}
  </div>
);

export default function App() {
  return (
    <div className="flex h-[720px] w-[1280px] flex-col overflow-hidden bg-white">
      <div className="h-px shrink-0 bg-[#4c4f55]" />
      <div className="flex h-[715px] shrink-0">
        <GeoGebraWindow />
        <NitroWindow />
      </div>
      <Taskbar />
    </div>
  );
}
